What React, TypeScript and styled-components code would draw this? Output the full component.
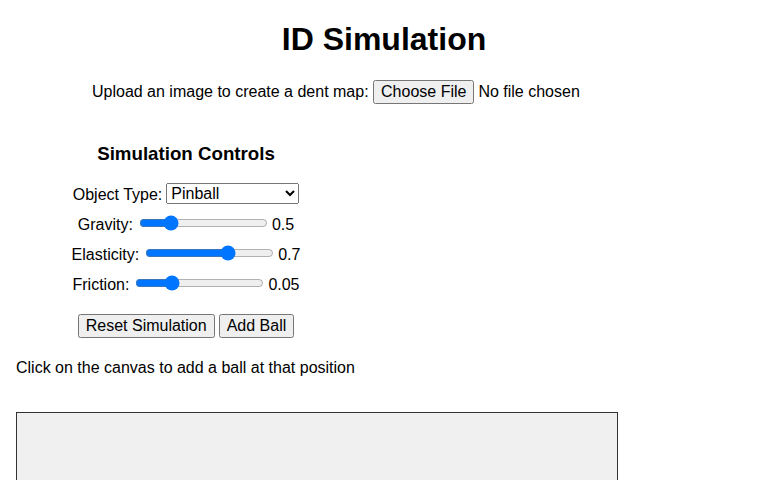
import React, { useState } from 'react'
import styled, { createGlobalStyle } from 'styled-components'

const Global = createGlobalStyle`
  body {
    margin:0;
    font-family:"Liberation Sans", Arial, sans-serif;
    font-size:16px;
    color:#000;
    background:#fff;
  }
  button, select, input {
    font-family:"Liberation Sans", Arial, sans-serif;
    font-size:16px;
  }
`

const Page = styled.div`
  padding:0 16px;
`

const Title = styled.h1`
  text-align:center;
  font-size:32px;
  margin:21.44px 0;
`

const Upload = styled.div`
  text-align:center;
`

const Controls = styled.div`
  width:340px;
  padding:20px 0 3px;
  text-align:center;
`

const ControlsTitle = styled.h3`
  font-size:18.72px;
  margin:18.72px 0;
`

const Rows = styled.div`
  display:flex;
  flex-direction:column;
  gap:10px;
`

const Row = styled.div`
  height:20px;
  display:flex;
  align-items:center;
  justify-content:center;
  gap:4px;
  white-space:nowrap;
`

const Text = styled.span`
  margin-top:4px;
`

const Select = styled.select`
  width:133px;
  height:21px;
`

const Range = styled.input`
  margin:2px 0 2px 2px;
  width:129px;
`

const Buttons = styled.div`
  margin-top:21px;
  display:flex;
  justify-content:center;
  gap:4px;
`

const Button = styled.button`
  padding:1px 6px;
  height:24px;
`

const Hint = styled.p`
  margin:18px 0 34.6px;
`

const Canvas = styled.canvas`
  display:block;
  border:1px solid #333;
  background:#f0f0f0;
`

type Slider = { key: string; label: string; min: number; max: number; step: number }

const sliders: Slider[] = [
  { key: 'gravity', label: 'Gravity:', min: 0.1, max: 2, step: 0.1 },
  { key: 'elasticity', label: 'Elasticity:', min: 0.1, max: 1, step: 0.1 },
  { key: 'friction', label: 'Friction:', min: 0, max: 0.2, step: 0.01 },
]

export default function App() {
  const [values, setValues] = useState<Record<string, number>>({
    gravity: 0.5,
    elasticity: 0.7,
    friction: 0.05,
  })

  return (
    <Page>
      <Global />
      <Title>ID Simulation</Title>
      <Upload>
        Upload an image to create a dent map: <input type="file" accept="image/*" />
      </Upload>

      <Controls>
        <ControlsTitle>Simulation Controls</ControlsTitle>
        <Rows>
          <Row>
            <Text as="label">Object Type:</Text>
            <Select defaultValue="pinball">
              <option value="pinball">Pinball</option>
              <option value="bowling">Bowling Ball</option>
              <option value="marble">Marble</option>
            </Select>
          </Row>
          {sliders.map(s => (
            <Row key={s.key}>
              <Text as="label">{s.label}</Text>
              <Range
                type="range"
                min={s.min}
                max={s.max}
                step={s.step}
                value={values[s.key]}
                onChange={e => setValues({ ...values, [s.key]: Number(e.target.value) })}
              />
              <Text>{values[s.key]}</Text>
            </Row>
          ))}
        </Rows>
        <Buttons>
          <Button>Reset Simulation</Button>
          <Button>Add Ball</Button>
        </Buttons>
      </Controls>

      <Hint>Click on the canvas to add a ball at that position</Hint>
      <Canvas width={600} height={400} />
    </Page>
  )
}
